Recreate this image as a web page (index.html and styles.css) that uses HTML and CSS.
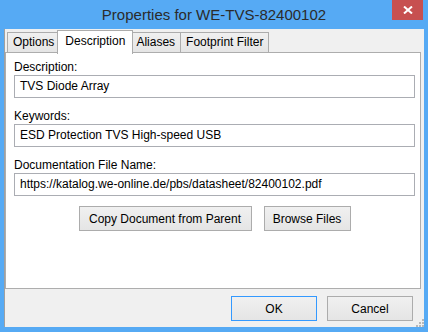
FILE: index.html
```html
<!DOCTYPE html>
<html>
<head>
    <title>Properties for WE-TVS-82400102</title>
    <link rel="stylesheet" href="styles.css">
</head>
<body>
    <div class="window">
        <div class="titlebar">
            <span class="title">Properties for WE-TVS-82400102</span>
            <div class="close">
                <svg width="10" height="8" viewBox="0 0 10 8">
                    <path d="M1 0.5 L9 7.5 M9 0.5 L1 7.5" stroke="#fff" stroke-width="2" fill="none"/>
                </svg>
            </div>
        </div>
        <div class="client">
            <div class="tabs">
                <div class="tab">Options</div>
                <div class="tab active">Description</div>
                <div class="tab">Aliases</div>
                <div class="tab">Footprint Filter</div>
            </div>
            <div class="panel">
                <div class="label">Description:</div>
                <div class="field">TVS Diode Array</div>

                <div class="label">Keywords:</div>
                <div class="field">ESD Protection TVS High-speed USB</div>

                <div class="label">Documentation File Name:</div>
                <div class="field">https://katalog.we-online.de/pbs/datasheet/82400102.pdf</div>

                <div class="actions">
                    <button class="btn btn-copy">Copy Document from Parent</button>
                    <button class="btn btn-browse">Browse Files</button>
                </div>
            </div>
            <div class="footer">
                <button class="btn btn-dialog btn-default">OK</button>
                <button class="btn btn-dialog">Cancel</button>
                <svg class="grip" width="10" height="10" viewBox="0 0 10 10">
                    <rect x="8" y="2" width="2" height="2" fill="#b8b8b8"/>
                    <rect x="5" y="5" width="2" height="2" fill="#b8b8b8"/>
                    <rect x="8" y="5" width="2" height="2" fill="#b8b8b8"/>
                    <rect x="2" y="8" width="2" height="2" fill="#b8b8b8"/>
                    <rect x="5" y="8" width="2" height="2" fill="#b8b8b8"/>
                    <rect x="8" y="8" width="2" height="2" fill="#b8b8b8"/>
                </svg>
            </div>
        </div>
    </div>
</body>
</html>
```

FILE: styles.css
```css
* {
    margin: 0;
    padding: 0;
    box-sizing: border-box;
}

body {
    font-family: "Liberation Sans", Arial, sans-serif;
    font-size: 12px;
    color: #000;
}

.window {
    width: 428px;
    height: 332px;
    background: #56aaf4;
    padding: 0 4px 5px 4px;
    display: flex;
    flex-direction: column;
}

/* title bar */
.titlebar {
    height: 29px;
    display: grid;
    grid-template-columns: 1fr auto 1fr;
}

.title {
    grid-column: 2;
    font-size: 15px;
    line-height: 29px;
    color: #2b2b2b;
    white-space: nowrap;
}

.close {
    grid-column: 3;
    justify-self: end;
    width: 31px;
    height: 20px;
    margin-right: 1px;
    background: #c75050;
    display: flex;
    justify-content: center;
    align-items: center;
}

/* client area */
.client {
    flex: 1;
    background: #f0f0f0;
    border-left: 1px solid #a0a0a0;
    display: flex;
    flex-direction: column;
    position: relative;
}

.tabs {
    display: flex;
    align-items: flex-start;
    padding: 1px 0 0 2px;
    height: 23px;
}

.tab {
    height: 20px;
    margin-top: 2px;
    margin-left: -1px;
    padding: 0 5px;
    line-height: 19px;
    background: linear-gradient(#f0f0f0, #e5e5e5);
    border: 1px solid #acacac;
    border-bottom: none;
    white-space: nowrap;
}

.tab:first-child {
    margin-left: 0;
}

.tab.active {
    height: 24px;
    margin: 0 -2px -1px -3px;
    padding: 0 7px;
    line-height: 21px;
    background: #fff;
    position: relative;
    z-index: 1;
}

.panel {
    flex: 1;
    margin: 0 3px 0 0;
    background: #fff;
    border: 1px solid #adadad;
    padding: 6px 5px 0 8px;
}

.label {
    line-height: 16px;
    height: 16px;
}

.field {
    height: 23px;
    border: 1px solid #abadb3;
    padding: 0 5px;
    line-height: 21px;
    margin-bottom: 10px;
    white-space: nowrap;
}

.actions {
    display: flex;
    justify-content: center;
    gap: 12px;
    margin-top: 1px;
}

.btn {
    height: 25px;
    border: 1px solid #acacac;
    background: linear-gradient(#f0f0f0, #e5e5e5);
    font-family: inherit;
    font-size: 12px;
    color: #000;
}

.btn-copy {
    width: 173px;
}

.btn-browse {
    width: 87px;
}

.footer {
    height: 38px;
    display: flex;
    justify-content: flex-end;
    gap: 10px;
    padding: 7px 11px 0 0;
}

.btn-dialog {
    width: 86px;
}

.btn-default {
    border-color: #3399ff;
}

.grip {
    position: absolute;
    right: 0;
    bottom: 0;
}
```
